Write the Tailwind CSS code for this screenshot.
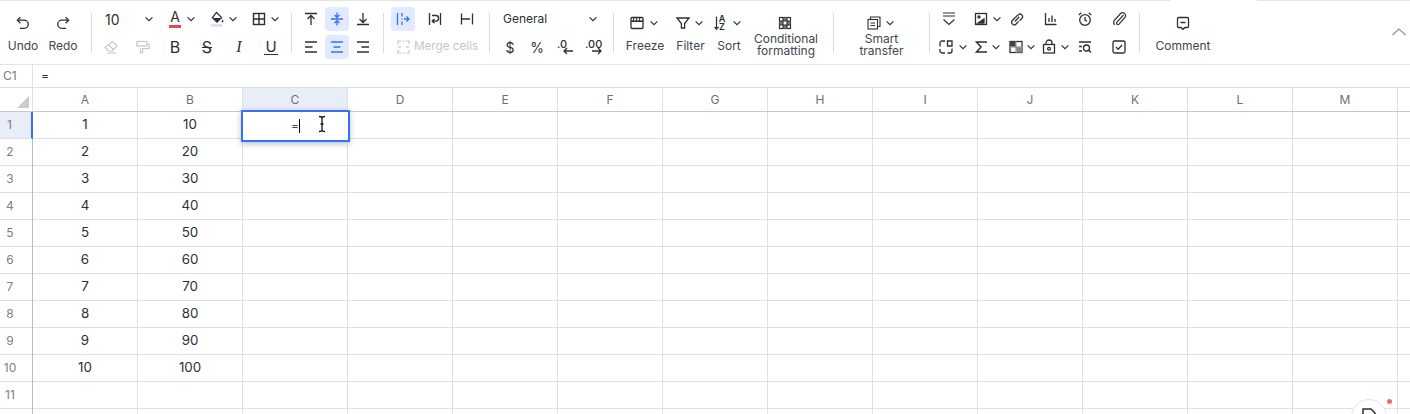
<!DOCTYPE html>
<html><head><meta charset="utf-8"><script src="https://cdn.jsdelivr.net/npm/@tailwindcss/browser@4"></script></head>
<body class="bg-white">
<svg class="hidden"><symbol id="c" viewBox="0 0 16 16"><path d="M4.6 6.4 8 9.6l3.4-3.2" fill="none" stroke="#2b2f36" stroke-width="1.2"/></symbol></svg>
<div class="relative w-[1410px] h-[414px] overflow-hidden bg-white font-['Inter',sans-serif] text-[#2b2f36]">

<!-- toolbar -->
<div class="relative flex h-[65px] border-t border-b border-[#e4e5e7] text-[12px] text-[#41464f]">
 <div class="absolute left-[1170px] -top-px w-[87px] h-px bg-white"></div>
 <!-- G1 -->
 <div class="w-[91px] shrink-0 flex pl-[3px] -mt-px">
  <div class="w-[40px] pt-[15px] flex flex-col items-center"><svg class="w-4 h-4" viewBox="0 0 16 16" fill="none" stroke="#2b2f36" stroke-width="1.3"><path d="M5.4 2.2 2.4 5.2l3 3"/><path d="M2.6 5.2h6.6a4 4 0 0 1 0 8.1H5"/></svg><div class="mt-2 leading-[14px] whitespace-nowrap">Undo</div></div>
  <div class="w-[40px] pt-[15px] flex flex-col items-center"><svg class="w-4 h-4" viewBox="0 0 16 16" fill="none" stroke="#2b2f36" stroke-width="1.3"><path d="M10.6 2.2l3 3-3 3"/><path d="M13.4 5.2H6.8a4 4 0 0 0 0 8.1H11"/></svg><div class="mt-2 leading-[14px] whitespace-nowrap">Redo</div></div>
 </div>
 <div class="w-px h-[40px] mt-[12px] bg-[#dcdde0] shrink-0"></div>
 <!-- G2 -->
 <div class="w-[199px] shrink-0 flex flex-col gap-1 pt-[6px]">
  <div class="flex h-6 items-center">
   <div class="ml-[13px] w-[36px] text-[14px] text-[#2b2f36]">10</div><svg class="w-4 h-4"><use href="#c"/></svg>
   <div class="ml-[10px] w-4 h-4 relative"><div class="absolute inset-x-0 -top-[3px] text-center text-[14px] leading-[17px] text-[#2b2f36]">A</div><div class="absolute left-[2px] right-[2px] top-[14px] h-[2.5px] bg-[#e5484d]"></div></div><svg class="w-4 h-4"><use href="#c"/></svg>
   <svg class="ml-[10px] w-4 h-4" viewBox="0 0 16 16"><path d="M7.5 1.5 12.6 6.600 8 11.200 3.400 6.800z" fill="none" stroke="#2b2f36" stroke-width="1.2"/><path d="M3.600 7h9L8 11.200z" fill="#2b2f36"/><path d="M13.500 8.500c.6.9.9 1.400.9 1.900a.9.900 0 0 1-1.800 0c0-.5.300-1 .9-1.900z" fill="#2b2f36"/><rect x="2" y="13.200" width="11" height="2.500" fill="#dcd8f0"/></svg><svg class="w-4 h-4"><use href="#c"/></svg>
   <svg class="ml-[10px] w-4 h-4" viewBox="0 0 16 16" fill="none" stroke="#2b2f36" stroke-width="1.4"><rect x="2.500" y="2.500" width="11" height="11"/><path d="M8 2.500v11M2.500 8h11"/></svg><svg class="w-4 h-4"><use href="#c"/></svg>
  </div>
  <div class="flex h-6 items-center pl-[3px]">
   <div class="w-8 flex justify-center"><svg class="w-4 h-4" viewBox="0 0 16 16" fill="none" stroke="#c4c7cc" stroke-width="1.2"><path d="M9.500 2.500 14 7l-5 5H5.500L2 8.500z"/><path d="M5.500 5.800 10.500 10.500M4 14h9"/></svg></div>
   <div class="w-8 flex justify-center"><svg class="w-4 h-4" viewBox="0 0 16 16" fill="none" stroke="#c4c7cc" stroke-width="1.2"><rect x="2" y="2.500" width="10" height="4.500"/><path d="M12 5h2.200v4.500H7.500V14H5.500V9.500"/></svg></div>
   <div class="w-8 text-center text-[16px] text-[#2b2f36]">B</div>
   <div class="w-8 text-center text-[16px] text-[#2b2f36] line-through">S</div>
   <div class="w-8 text-center text-[16px] italic text-[#2b2f36] font-['Liberation_Serif',serif]">I</div>
   <div class="w-8 flex justify-center"><div class="text-[15px] leading-[15px] border-b-[1.5px] border-[#2b2f36] px-[1px] text-[#2b2f36]">U</div></div>
  </div>
 </div>
 <div class="w-px h-[40px] mt-[12px] bg-[#dcdde0] shrink-0"></div>
 <!-- G3 -->
 <div class="w-[91px] shrink-0 flex flex-col gap-1 pt-[6px] pl-[7px]">
  <div class="flex gap-[2px] h-6">
   <div class="w-6 h-6 flex items-center justify-center"><svg class="w-4 h-4" viewBox="0 0 16 16" fill="none" stroke="#2b2f36" stroke-width="1.3"><path d="M2 2.500h12M8 14V5M4.500 8 8 4.500 11.500 8"/></svg></div>
   <div class="w-6 h-6 rounded bg-[#e1eaff] flex items-center justify-center"><svg class="w-4 h-4" viewBox="0 0 16 16" fill="none" stroke="#3370ff" stroke-width="1.3"><path d="M2 8h12M8 1.500v4.500M5.500 4 8 6.300 10.500 4M8 14.500V10M5.500 12 8 9.700l2.500 2.300"/></svg></div>
   <div class="w-6 h-6 flex items-center justify-center"><svg class="w-4 h-4" viewBox="0 0 16 16" fill="none" stroke="#2b2f36" stroke-width="1.3"><path d="M2 13.500h12M8 2v9M4.500 8 8 11.500 11.500 8"/></svg></div>
  </div>
  <div class="flex gap-[2px] h-6">
   <div class="w-6 h-6 flex items-center justify-center"><svg class="w-4 h-4" viewBox="0 0 16 16" fill="none" stroke="#2b2f36" stroke-width="1.3"><path d="M2 3h12M2 8h7.500M2 13h12"/></svg></div>
   <div class="w-6 h-6 rounded bg-[#e1eaff] flex items-center justify-center"><svg class="w-4 h-4" viewBox="0 0 16 16" fill="none" stroke="#3370ff" stroke-width="1.3"><path d="M2 3h12M4.500 8h7M2 13h12"/></svg></div>
   <div class="w-6 h-6 flex items-center justify-center"><svg class="w-4 h-4" viewBox="0 0 16 16" fill="none" stroke="#2b2f36" stroke-width="1.3"><path d="M2 3h12M6.500 8H14M2 13h12"/></svg></div>
  </div>
 </div>
 <div class="w-px h-[40px] mt-[12px] bg-[#dcdde0] shrink-0"></div>
 <!-- G4 -->
 <div class="w-[105px] shrink-0 flex flex-col gap-1 pt-[6px]">
  <div class="flex gap-2 h-6 pl-[7px]">
   <div class="w-6 h-6 rounded bg-[#e1eaff] flex items-center justify-center"><svg class="w-4 h-4" viewBox="0 0 16 16" fill="none" stroke="#3370ff" stroke-width="1.3"><path d="M2.500 2v12M7 2v3.500M7 7.500v1M7 10.500V14M9 8h5M11.500 5.500 14 8l-2.500 2.500"/></svg></div>
   <div class="w-6 h-6 flex items-center justify-center"><svg class="w-4 h-4" viewBox="0 0 16 16" fill="none" stroke="#2b2f36" stroke-width="1.3"><path d="M2.500 2v12M13.500 2v12M5 4.500h3.800a2.800 2.800 0 0 1 0 5.600H5.500M7.500 8l-2.300 2.100L7.500 12.300"/></svg></div>
   <div class="w-6 h-6 flex items-center justify-center"><svg class="w-4 h-4" viewBox="0 0 16 16" fill="none" stroke="#2b2f36" stroke-width="1.3"><path d="M2.500 2.500v11M13.500 2.500v11M2.500 8H11"/></svg></div>
  </div>
  <div class="flex h-6 items-center pl-[13px] text-[#c4c7cc]">
   <svg class="w-[13px] h-[14px] mr-1 shrink-0" viewBox="0 0 13 14" fill="none" stroke="#c4c7cc" stroke-width="1.2"><path d="M1 4V1h3M9 1h3v3M12 10v3H9M4 13H1v-3M1 6.800h3M9 6.800h3M5.500 1h2M5.500 13h2"/></svg>
   <span class="whitespace-nowrap text-[11.7px]">Merge cells</span>
  </div>
 </div>
 <div class="w-px h-[40px] mt-[12px] bg-[#dcdde0] shrink-0"></div>
 <!-- G5 -->
 <div class="w-[123px] shrink-0 flex flex-col gap-1 pt-[6px]">
  <div class="flex h-6 items-center pl-[13px]"><div class="w-[82px] text-[#2b2f36]">General</div><svg class="w-4 h-4"><use href="#c"/></svg></div>
  <div class="flex h-6 items-center pl-[8px] text-[#2b2f36]">
   <div class="w-6 text-center text-[14px]">$</div>
   <div class="w-6 ml-[3px] text-center text-[14px]">%</div>
   <div class="w-6 ml-[5px] relative h-6"><span class="absolute left-[3px] top-[2px] text-[11px] leading-[14px] font-medium">.0</span><svg class="absolute left-[9px] top-[12px] w-[10px] h-2" viewBox="0 0 10 8" fill="none" stroke="#2b2f36" stroke-width="1.3"><path d="M10 4H1M4 1 1 4l3 3"/></svg></div>
   <div class="w-6 ml-[6px] relative h-6"><span class="absolute left-[1px] top-[2px] text-[11px] leading-[14px] font-medium">.00</span><svg class="absolute left-[8px] top-[12px] w-[10px] h-2" viewBox="0 0 10 8" fill="none" stroke="#2b2f36" stroke-width="1.3"><path d="M0 4h9M6 1l3 3-3 3"/></svg></div>
  </div>
 </div>
 <div class="w-px h-[40px] mt-[12px] bg-[#dcdde0] shrink-0"></div>
 <!-- G6 -->
 <div class="w-[219px] shrink-0 flex pl-[9px] pt-[14px]">
  <div class="w-[44px] shrink-0 flex flex-col items-center"><div class="flex justify-center"><svg class="w-4 h-4" viewBox="0 0 16 16" fill="none" stroke="#2b2f36" stroke-width="1.3"><rect x="2" y="2.500" width="12" height="11" rx="1"/><path d="M2 6.200h12" stroke-width="1.600"/><path d="M5 2.500 4 6M8 2.500 7 6M11 2.500 10 6" stroke-width="1"/></svg><svg class="w-4 h-4 ml-px"><use href="#c"/></svg></div><div class="mt-2 leading-[14px]">Freeze</div></div>
  <div class="w-[47px] shrink-0 flex flex-col items-center"><div class="flex justify-center"><svg class="w-4 h-4" viewBox="0 0 16 16" fill="none" stroke="#2b2f36" stroke-width="1.3"><path d="M2 3h12L9.600 8.500V13H6.400V8.500z"/></svg><svg class="w-4 h-4"><use href="#c"/></svg></div><div class="mt-2 leading-[14px]">Filter</div></div>
  <div class="w-[30px] shrink-0 flex flex-col items-center"><div class="flex justify-center shrink-0 w-[32px]"><svg class="w-4 h-4 shrink-0 overflow-visible" viewBox="0 0 16 16" fill="none" stroke="#2b2f36" stroke-width="1.200"><path d="M3.500 1.500v13M1.500 12l2 2.200 2-2.200"/><text x="5.800" y="7.300" font-size="9" font-weight="600" stroke="none" fill="#2b2f36" font-family="Inter">A</text><text x="6" y="15" font-size="9" font-weight="600" stroke="none" fill="#2b2f36" font-family="Inter">Z</text></svg><svg class="w-4 h-4 shrink-0"><use href="#c"/></svg></div><div class="mt-2 leading-[14px]">Sort</div></div>
  <div class="w-[84px] shrink-0 flex flex-col items-center"><svg class="w-4 h-4 mr-[2px]" viewBox="0 0 16 16"><rect x="2.500" y="2.500" width="11" height="11" fill="none" stroke="#2b2f36" stroke-width="1.200"/><path d="M6 2.500h4V6H6zM2.500 6H6v4H2.500zM10 6h3.500v4H10zM6 10h4v3.500H6z" fill="#777"/><path d="M6 2.500v11M10 2.500v11M2.500 6h11M2.500 10h11" stroke="#2b2f36" stroke-width="1.100"/></svg><div class="mt-[2px] text-center whitespace-nowrap"><div class="h-3 leading-[12px]">Conditional</div><div class="h-3 leading-[12px]">formatting</div></div></div>
 </div>
 <div class="w-px h-[40px] mt-[12px] bg-[#dcdde0] shrink-0"></div>
 <!-- G7 -->
 <div class="w-[95px] shrink-0 flex flex-col items-center pt-[14px]"><div class="flex"><svg class="w-4 h-4" viewBox="0 0 16 16" fill="none" stroke="#2b2f36" stroke-width="1.100"><rect x="2" y="4.500" width="9.500" height="9.500"/><path d="M4.500 4.500V2H14v9.500h-2.500"/><path d="M4.500 8h4.500M4.500 10.500h4.500" stroke-width="1"/></svg><svg class="w-4 h-4"><use href="#c"/></svg></div><div class="mt-[2px] text-center"><div class="h-3 leading-[12px]">Smart</div><div class="h-3 leading-[12px]">transfer</div></div></div>
 <div class="w-px h-[40px] mt-[12px] bg-[#dcdde0] shrink-0"></div>
 <!-- G8 -->
 <div class="w-[209px] shrink-0 flex flex-col gap-1 pt-[6px]">
  <div class="flex h-6 items-center pl-[11px]">
   <svg class="w-4 h-4" viewBox="0 0 16 16" fill="none" stroke="#2b2f36" stroke-width="1.200"><path d="M2 2h12M2 5h12M2.500 8.500 8 13.500l5.500-5"/></svg>
   <svg class="ml-4 w-4 h-4" viewBox="0 0 16 16" fill="none" stroke="#2b2f36" stroke-width="1.300"><rect x="2.500" y="2.500" width="11" height="11"/><circle cx="6" cy="6" r="1" fill="#2b2f36"/><path d="M5 12 11 8v4z" fill="#2b2f36"/></svg><svg class="w-4 h-4"><use href="#c"/></svg>
   <svg class="ml-1 w-4 h-4" viewBox="0 0 16 16" fill="none" stroke="#2b2f36" stroke-width="1.300"><path d="M9.500 3.500a2.600 2.600 0 0 1 3.600 3.600l-2.600 2.800M6.500 6.200 3.200 9.700a2.600 2.600 0 0 0 3.700 3.600l2.700-2.900"/><path d="M6 10.500 10.200 5.800"/><path d="M9.500 3.500 6.500 6.200"/></svg>
   <svg class="ml-[18px] w-4 h-4" viewBox="0 0 16 16" fill="none" stroke="#2b2f36" stroke-width="1.300"><path d="M2.500 2v11.500h11M6 7v4M9 4.500V11M12 8v3"/></svg>
   <svg class="ml-[18px] w-4 h-4" viewBox="0 0 16 16" fill="none" stroke="#2b2f36" stroke-width="1.300"><circle cx="8" cy="9" r="5.300"/><path d="M8 6v3.200l2 1M1.800 4 4.300 1.800M14.200 4l-2.500-2.200"/></svg>
   <svg class="ml-[18px] w-4 h-4" viewBox="0 0 16 16" fill="none" stroke="#2b2f36" stroke-width="1.200"><path d="M12.500 4 6 11.200a1.400 1.400 0 0 0 2 2L14 6.500a3 3 0 0 0-4.400-4L3 9.800a4 4 0 0 0 .6 4"/></svg>
  </div>
  <div class="flex h-6 items-center pl-[8px]">
   <svg class="w-4 h-4" viewBox="0 0 16 16" fill="none" stroke="#2b2f36" stroke-width="1.300"><path d="M9.500 2H14v5H9.500zM2 7.500V4a2 2 0 0 1 2-2h3M7 14H4a2 2 0 0 1-2-2v-2M9.500 14H12a2 2 0 0 0 2-2V9.500"/></svg><svg class="ml-px w-4 h-4"><use href="#c"/></svg>
   <svg class="ml-[2px] w-4 h-4" viewBox="0 0 16 16" fill="none" stroke="#2b2f36" stroke-width="1.500"><path d="M13 4V3H3.500L8 8l-4.500 5H13v-1"/></svg><svg class="-ml-px w-4 h-4"><use href="#c"/></svg>
   <svg class="ml-1 w-4 h-4" viewBox="0 0 16 16"><rect x="2" y="2.500" width="12" height="11" fill="none" stroke="#2b2f36" stroke-width="1.300"/><path d="M2 2.500h6V8H2z" fill="#444"/><path d="M8 8h6v5.500H8z" fill="#888"/><path d="M2 8h12M8 2.500v11" stroke="#fff" stroke-width="1"/><path d="M2 8h12M8 2.500v11" stroke="#2b2f36" stroke-width=".6"/></svg><svg class="-ml-px w-4 h-4"><use href="#c"/></svg>
   <svg class="ml-[2px] w-4 h-4" viewBox="0 0 16 16" fill="none" stroke="#2b2f36" stroke-width="1.300"><rect x="2.500" y="5.500" width="11" height="8.500"/><path d="M5 5.500V4a3 3 0 0 1 6 0v1.500"/><circle cx="8" cy="9.700" r="1.400"/></svg><svg class="w-4 h-4"><use href="#c"/></svg>
   <svg class="ml-1 w-4 h-4" viewBox="0 0 16 16" fill="none" stroke="#2b2f36" stroke-width="1.300"><path d="M2 3h12M2 7.500h3M2 12h3"/><circle cx="9.500" cy="9" r="3"/><path d="M11.700 11.200 14 13.500"/></svg>
   <svg class="ml-[18px] w-4 h-4" viewBox="0 0 16 16" fill="none" stroke="#2b2f36" stroke-width="1.300"><rect x="2" y="2" width="12" height="12" rx="1.500"/><path d="M5 8l2.200 2.200L11 6"/></svg>
  </div>
 </div>
 <div class="w-px h-[40px] mt-[12px] bg-[#dcdde0] shrink-0"></div>
 <!-- G9 -->
 <div class="w-[86px] shrink-0 flex flex-col items-center pt-[14px]"><svg class="w-4 h-4" viewBox="0 0 16 16" fill="none" stroke="#2b2f36" stroke-width="1.300"><path d="M3.500 2.500h9a1 1 0 0 1 1 1v8a1 1 0 0 1-1 1H10L8 14.300 6 12.500H3.500a1 1 0 0 1-1-1v-8a1 1 0 0 1 1-1zM5.500 7.500h5"/></svg><div class="mt-2 leading-[14px]">Comment</div></div>
 <div class="ml-auto mr-[3px] pt-[23px]"><svg class="w-4 h-4" viewBox="0 0 16 16" fill="none" stroke="#8f959e" stroke-width="1.200"><path d="M1.500 11 8 5l6.500 6"/></svg></div>
</div>

<!-- formula bar -->
<div class="flex h-[23px] border-b border-[#dee0e3] items-center text-[12px]">
 <div class="w-[33px] h-full border-r border-[#dee0e3] pl-[3px] leading-[22px] text-[#767a82]">C1</div>
 <div class="pl-[8px] leading-[22px]">=</div>
</div>

<!-- header -->
<div class="flex h-6 border-b border-[#c7c9cd] text-[12px] text-[#6b6f76] text-center leading-[23px]">
 <div class="w-[33px] shrink-0 border-r border-[#dee0e3] relative"><svg class="absolute left-[17px] top-[8px] w-3 h-3" viewBox="0 0 12 12"><path d="M12 0v12H0z" fill="#c9cbcf"/></svg></div>
 <div class="w-[105px] shrink-0 border-r border-[#dee0e3]">A</div>
 <div class="w-[105px] shrink-0 border-r border-[#dee0e3]">B</div>
 <div class="w-[105px] shrink-0 border-r border-[#dee0e3] bg-[#e9edf8]">C</div>
 <div class="w-[105px] shrink-0 border-r border-[#dee0e3]">D</div>
 <div class="w-[105px] shrink-0 border-r border-[#dee0e3]">E</div>
 <div class="w-[105px] shrink-0 border-r border-[#dee0e3]">F</div>
 <div class="w-[105px] shrink-0 border-r border-[#dee0e3]">G</div>
 <div class="w-[105px] shrink-0 border-r border-[#dee0e3]">H</div>
 <div class="w-[105px] shrink-0 border-r border-[#dee0e3]">I</div>
 <div class="w-[105px] shrink-0 border-r border-[#dee0e3]">J</div>
 <div class="w-[105px] shrink-0 border-r border-[#dee0e3]">K</div>
 <div class="w-[105px] shrink-0 border-r border-[#dee0e3]">L</div>
 <div class="w-[105px] shrink-0 border-r border-[#dee0e3]">M</div>
</div>

<!-- body: row numbers + grid -->
<div class="relative flex">
 <div class="w-[33px] shrink-0 border-r border-[#b9bcc6] text-[12px] text-[#7b8087] leading-[26px]">
  <div class="h-[27px] -mr-px border-r-2 border-b border-b-[#dee0e3] border-r-[#3370ff] bg-[#e9edf8] pr-[12px] text-center">1</div>
  <div class="h-[27px] border-b border-[#dee0e3] pr-[12px] text-center">2</div>
  <div class="h-[27px] border-b border-[#dee0e3] pr-[12px] text-center">3</div>
  <div class="h-[27px] border-b border-[#dee0e3] pr-[12px] text-center">4</div>
  <div class="h-[27px] border-b border-[#dee0e3] pr-[12px] text-center">5</div>
  <div class="h-[27px] border-b border-[#dee0e3] pr-[12px] text-center">6</div>
  <div class="h-[27px] border-b border-[#dee0e3] pr-[12px] text-center">7</div>
  <div class="h-[27px] border-b border-[#dee0e3] pr-[12px] text-center">8</div>
  <div class="h-[27px] border-b border-[#dee0e3] pr-[12px] text-center">9</div>
  <div class="h-[27px] border-b border-[#dee0e3] pr-[12px] text-center">10</div>
  <div class="h-[27px] border-b border-[#dee0e3] pr-[12px] text-center">11</div>
  <div class="h-[27px]"></div>
 </div>
 <div class="w-[1377px] shrink-0 h-[324px] grid grid-cols-[repeat(13,105px)_1fr] grid-rows-[repeat(12,27px)] text-[13.33px] text-center leading-[25px]">
  <div class="border-r border-b border-[#dee0e3]">1</div><div class="border-r border-b border-[#dee0e3]">10</div>
  <div class="row-span-12 col-start-3 row-start-1 border-r border-[#dee0e3] bg-[linear-gradient(to_bottom,transparent_26px,#dee0e3_26px,#dee0e3_27px)] bg-[length:100%_27px]"></div>
  <div class="row-span-12 col-start-4 row-start-1 border-r border-[#dee0e3] bg-[linear-gradient(to_bottom,transparent_26px,#dee0e3_26px,#dee0e3_27px)] bg-[length:100%_27px]"></div>
  <div class="row-span-12 col-start-5 row-start-1 border-r border-[#dee0e3] bg-[linear-gradient(to_bottom,transparent_26px,#dee0e3_26px,#dee0e3_27px)] bg-[length:100%_27px]"></div>
  <div class="row-span-12 col-start-6 row-start-1 border-r border-[#dee0e3] bg-[linear-gradient(to_bottom,transparent_26px,#dee0e3_26px,#dee0e3_27px)] bg-[length:100%_27px]"></div>
  <div class="row-span-12 col-start-7 row-start-1 border-r border-[#dee0e3] bg-[linear-gradient(to_bottom,transparent_26px,#dee0e3_26px,#dee0e3_27px)] bg-[length:100%_27px]"></div>
  <div class="row-span-12 col-start-8 row-start-1 border-r border-[#dee0e3] bg-[linear-gradient(to_bottom,transparent_26px,#dee0e3_26px,#dee0e3_27px)] bg-[length:100%_27px]"></div>
  <div class="row-span-12 col-start-9 row-start-1 border-r border-[#dee0e3] bg-[linear-gradient(to_bottom,transparent_26px,#dee0e3_26px,#dee0e3_27px)] bg-[length:100%_27px]"></div>
  <div class="row-span-12 col-start-10 row-start-1 border-r border-[#dee0e3] bg-[linear-gradient(to_bottom,transparent_26px,#dee0e3_26px,#dee0e3_27px)] bg-[length:100%_27px]"></div>
  <div class="row-span-12 col-start-11 row-start-1 border-r border-[#dee0e3] bg-[linear-gradient(to_bottom,transparent_26px,#dee0e3_26px,#dee0e3_27px)] bg-[length:100%_27px]"></div>
  <div class="row-span-12 col-start-12 row-start-1 border-r border-[#dee0e3] bg-[linear-gradient(to_bottom,transparent_26px,#dee0e3_26px,#dee0e3_27px)] bg-[length:100%_27px]"></div>
  <div class="row-span-12 col-start-13 row-start-1 border-r border-[#dee0e3] bg-[linear-gradient(to_bottom,transparent_26px,#dee0e3_26px,#dee0e3_27px)] bg-[length:100%_27px]"></div>
  <div class="row-span-12 col-start-14 row-start-1 bg-[linear-gradient(to_bottom,transparent_26px,#dee0e3_26px,#dee0e3_27px)] bg-[length:100%_27px]"></div>
  <div class="border-r border-b border-[#dee0e3]">2</div><div class="border-r border-b border-[#dee0e3]">20</div>
  <div class="border-r border-b border-[#dee0e3]">3</div><div class="border-r border-b border-[#dee0e3]">30</div>
  <div class="border-r border-b border-[#dee0e3]">4</div><div class="border-r border-b border-[#dee0e3]">40</div>
  <div class="border-r border-b border-[#dee0e3]">5</div><div class="border-r border-b border-[#dee0e3]">50</div>
  <div class="border-r border-b border-[#dee0e3]">6</div><div class="border-r border-b border-[#dee0e3]">60</div>
  <div class="border-r border-b border-[#dee0e3]">7</div><div class="border-r border-b border-[#dee0e3]">70</div>
  <div class="border-r border-b border-[#dee0e3]">8</div><div class="border-r border-b border-[#dee0e3]">80</div>
  <div class="border-r border-b border-[#dee0e3]">9</div><div class="border-r border-b border-[#dee0e3]">90</div>
  <div class="border-r border-b border-[#dee0e3]">10</div><div class="border-r border-b border-[#dee0e3]">100</div>
  <div class="border-r border-b border-[#dee0e3]"></div><div class="border-r border-b border-[#dee0e3]"></div>
  <div class="border-r border-b border-[#dee0e3]"></div><div class="border-r border-b border-[#dee0e3]"></div>
 </div>

 <!-- selection editor -->
 <div class="absolute left-[241px] -top-[2px] w-[109px] h-[32px] border-[2.5px] border-[#3370ff] bg-white shadow-[0_2px_6px_rgba(0,0,0,0.25)] text-[13.33px]">
  <div class="absolute left-[48px] top-[3px] leading-[22px] text-[#41464f] text-[12px]">=</div>
  <div class="absolute left-[56px] top-[7px] w-px h-[14px] bg-black"></div>
  <svg class="absolute left-[74px] top-[3px] w-[10px] h-[18px]" viewBox="0 0 10 18" fill="none" stroke="#111" stroke-width="1.300"><path d="M2 1.500c1.500 0 3 .3 3 1.500 0-1.200 1.500-1.500 3-1.500M5 3v12M2 16.500c1.500 0 3-.3 3-1.500 0 1.200 1.500 1.500 3 1.500M3.500 9h3"/></svg>
 </div>
</div>

<!-- floating help button -->
<div class="absolute left-[1351px] top-[399px] w-9 h-9 rounded-full bg-white border border-[#e4e5e7] flex justify-center pt-[8px]"><svg class="w-4 h-4" viewBox="0 0 16 16" fill="none" stroke="#2b2f36" stroke-width="1.500"><path d="M2 1h8l4 4v10H2z"/></svg></div>
<div class="absolute left-[1386.500px] top-[398.500px] w-[5px] h-[5px] rounded-full bg-[#f76964]"></div>
</div>
</body></html>
